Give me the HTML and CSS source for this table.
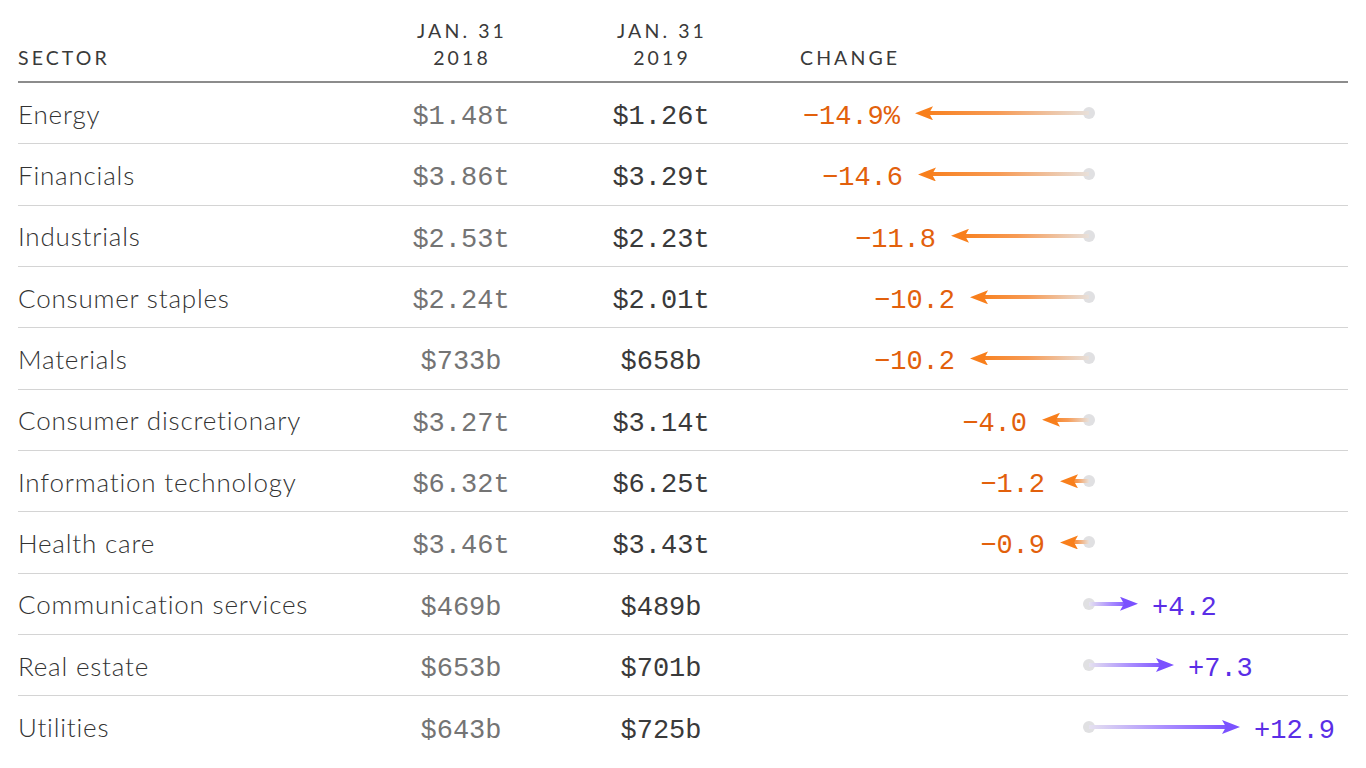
FILE: index.html
```html
<!DOCTYPE html>
<html>
<head>
<meta charset="utf-8">
<link rel="stylesheet" href="styles.css">
</head>
<body>
<div class="table">
  <div class="head">
    <div class="h">Sector</div>
    <div class="h num">Jan. 31<br>2018</div>
    <div class="h num">Jan. 31<br>2019</div>
    <div class="h change">Change</div>
  </div>

  <div class="row">
    <div class="sector">Energy</div>
    <div class="v old">$1.48t</div>
    <div class="v new">$1.26t</div>
    <div class="chg"><div class="neg"><span class="val">−14.9%</span><span class="arrow left" style="width:174px"></span><span class="dot"></span></div></div>
  </div>
  <div class="row">
    <div class="sector">Financials</div>
    <div class="v old">$3.86t</div>
    <div class="v new">$3.29t</div>
    <div class="chg"><div class="neg"><span class="val">−14.6</span><span class="arrow left" style="width:171px"></span><span class="dot"></span></div></div>
  </div>
  <div class="row">
    <div class="sector">Industrials</div>
    <div class="v old">$2.53t</div>
    <div class="v new">$2.23t</div>
    <div class="chg"><div class="neg"><span class="val">−11.8</span><span class="arrow left" style="width:138px"></span><span class="dot"></span></div></div>
  </div>
  <div class="row">
    <div class="sector">Consumer staples</div>
    <div class="v old">$2.24t</div>
    <div class="v new">$2.01t</div>
    <div class="chg"><div class="neg"><span class="val">−10.2</span><span class="arrow left" style="width:119px"></span><span class="dot"></span></div></div>
  </div>
  <div class="row">
    <div class="sector">Materials</div>
    <div class="v old">$733b</div>
    <div class="v new">$658b</div>
    <div class="chg"><div class="neg"><span class="val">−10.2</span><span class="arrow left" style="width:119px"></span><span class="dot"></span></div></div>
  </div>
  <div class="row">
    <div class="sector">Consumer discretionary</div>
    <div class="v old">$3.27t</div>
    <div class="v new">$3.14t</div>
    <div class="chg"><div class="neg"><span class="val">−4.0</span><span class="arrow left" style="width:47px"></span><span class="dot"></span></div></div>
  </div>
  <div class="row">
    <div class="sector">Information technology</div>
    <div class="v old">$6.32t</div>
    <div class="v new">$6.25t</div>
    <div class="chg"><div class="neg"><span class="val">−1.2</span><span class="arrow left" style="width:29px"></span><span class="dot"></span></div></div>
  </div>
  <div class="row">
    <div class="sector">Health care</div>
    <div class="v old">$3.46t</div>
    <div class="v new">$3.43t</div>
    <div class="chg"><div class="neg"><span class="val">−0.9</span><span class="arrow left" style="width:29px"></span><span class="dot"></span></div></div>
  </div>
  <div class="row">
    <div class="sector">Communication services</div>
    <div class="v old">$469b</div>
    <div class="v new">$489b</div>
    <div class="chg"><div class="pos"><span class="dot"></span><span class="arrow right" style="width:49px"></span><span class="val">+4.2</span></div></div>
  </div>
  <div class="row">
    <div class="sector">Real estate</div>
    <div class="v old">$653b</div>
    <div class="v new">$701b</div>
    <div class="chg"><div class="pos"><span class="dot"></span><span class="arrow right" style="width:85px"></span><span class="val">+7.3</span></div></div>
  </div>
  <div class="row last">
    <div class="sector">Utilities</div>
    <div class="v old">$643b</div>
    <div class="v new">$725b</div>
    <div class="chg"><div class="pos"><span class="dot"></span><span class="arrow right" style="width:151px"></span><span class="val">+12.9</span></div></div>
  </div>
</div>
</body>
</html>
```

FILE: styles.css
```css
html, body {
  margin: 0;
  padding: 0;
  background: #ffffff;
}

.table {
  margin: 0 18px;
  width: 1330px;
}

.head, .row {
  display: grid;
  grid-template-columns: 343px 200px 200px 1fr;
}

.head {
  height: 83px;
  box-sizing: border-box;
  border-bottom: 2px solid #8c8c8c;
  align-items: end;
  padding-bottom: 10px;
}

.h {
  font-family: "Lato", "Noto Sans", sans-serif;
  font-size: 19.5px;
  line-height: 27px;
  letter-spacing: 3.1px;
  text-transform: uppercase;
  color: #3a3a3a;
}

.h.num {
  text-align: center;
  padding-left: 2px;
}

.h.change {
  padding-left: 39px;
}

.row {
  height: 61.33px;
  box-sizing: border-box;
  border-bottom: 1px solid #d4d4d4;
  align-items: center;
}

.row.last {
  border-bottom: none;
}

.sector {
  font-family: "Lato", "Noto Sans", sans-serif;
  font-weight: 300;
  font-size: 26px;
  letter-spacing: 0.8px;
  color: #333333;
  margin-top: 1px;
}

.v {
  font-family: "Liberation Mono", monospace;
  font-size: 27px;
  text-align: center;
  margin-top: 8px;
}

.v.old { color: #747474; }
.v.new { color: #3a3a3a; }

.chg {
  height: 100%;
  display: flex;
  align-items: center;
}

.neg, .pos {
  display: flex;
  align-items: center;
}

.neg {
  width: 334px;
  justify-content: flex-end;
}

.pos {
  margin-left: 322px;
}

.val {
  font-family: "Liberation Mono", monospace;
  font-size: 27px;
  line-height: 30px;
  margin-top: 8px;
}

.neg .val {
  color: #e2600c;
  margin-right: 15px;
}

.pos .val {
  color: #5a2ee6;
  margin-left: 14px;
}

.dot {
  width: 12px;
  height: 12px;
  border-radius: 50%;
  background: #e0e0e2;
  flex: none;
}

.neg .dot { margin-left: -6px; }
.pos .arrow { margin-left: -6px; }

.arrow {
  position: relative;
  height: 14px;
  flex: none;
}

.arrow::before {
  content: "";
  position: absolute;
  top: 5px;
  height: 4px;
}

.arrow::after {
  content: "";
  position: absolute;
  top: 0;
  width: 18px;
  height: 14px;
}

.arrow.left::before {
  left: 8px;
  right: 0;
  background: linear-gradient(to right, #f87f1c 0%, #f79b55 45%, #e8e0da 100%);
}

.arrow.left::after {
  left: 0;
  background: #f87f1c;
  clip-path: polygon(0 50%, 100% 0, 78% 50%, 100% 100%);
}

.arrow.right::before {
  left: 0;
  right: 8px;
  background: linear-gradient(to right, #e5e1f0 0%, #a88bff 55%, #7b52ff 100%);
}

.arrow.right::after {
  right: 0;
  background: #7b52ff;
  clip-path: polygon(100% 50%, 0 0, 22% 50%, 0 100%);
}
```
